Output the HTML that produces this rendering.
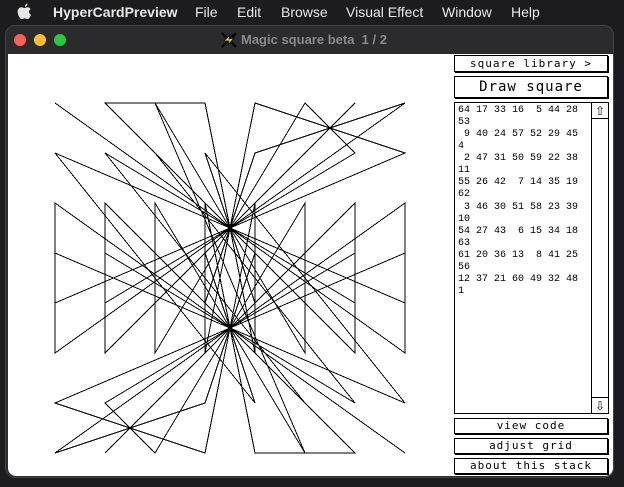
<!DOCTYPE html>
<html><head><meta charset="utf-8"><style>
*{margin:0;padding:0;box-sizing:border-box}
body{width:624px;height:487px;background:#1c1c1e;position:relative;overflow:hidden;font-family:"Liberation Sans",sans-serif}
.menu{position:absolute;left:0;top:0;width:624px;height:24px;background:#1c1c1e;color:#e8e8e8;font-size:14px;line-height:24px}
.menu span{position:absolute;top:0}
.win{position:absolute;left:5px;top:25px;width:609px;height:453px;background:#2b2b2d;border-radius:10px;border:1px solid #444}
.title{position:absolute;left:0;top:0;width:100%;height:28px;color:#8a8a8a;font-weight:bold;font-size:13px;line-height:28px}
.dot{position:absolute;top:8px;width:12px;height:12px;border-radius:6px}
.content{position:absolute;left:2px;top:28px;width:605px;height:422px;background:#fff;border-radius:0 0 8px 8px}
.btn{position:absolute;border:1px solid #000;box-shadow:1px 1px 0 #000;background:#fff;text-align:center;color:#000;font-family:"DejaVu Sans Mono","Liberation Mono",monospace;font-size:11px;letter-spacing:1px}
.fld{position:absolute;left:454px;top:102px;width:155px;height:312px;border:1px solid #000;background:#fff;font-family:"Liberation Mono",monospace;font-size:10px;line-height:12.07px;padding:2px 0 0 3px;white-space:pre;color:#000}
.sb{position:absolute;left:591px;top:102px;width:18px;height:312px;border:1px solid #000;background:#fff}
</style></head><body>
<div class="menu">
<svg style="position:absolute;left:17px;top:3px" width="15" height="17" viewBox="0 0 15 17"><path d="M10.5 0.5 C10.6 2 9.6 3.6 8 3.8 C7.8 2.3 8.9 0.8 10.5 0.5 Z M7.5 5 C8.5 5 9.5 4.2 10.8 4.3 C12 4.4 13 5 13.6 6 C11.3 7.4 11.7 10.7 14 11.7 C13.4 13.4 12.3 15.6 10.9 16 C9.8 16.2 9.2 15.4 7.7 15.4 C6.2 15.4 5.6 16.2 4.5 16 C2.8 15.5 0.5 11.8 0.6 8.6 C0.7 5.6 2.8 4.3 4.4 4.3 C5.7 4.3 6.6 5 7.5 5 Z" fill="#e8e8e8"/></svg>
<span style="left:53px;font-weight:bold">HyperCardPreview</span>
<span style="left:195px">File</span>
<span style="left:237px">Edit</span>
<span style="left:281px">Browse</span>
<span style="left:346px">Visual Effect</span>
<span style="left:442px">Window</span>
<span style="left:511px">Help</span>
</div>
<div class="win">
<div class="title">
<div class="dot" style="left:8px;background:#fe5f57"></div>
<div class="dot" style="left:28px;background:#febc2e"></div>
<div class="dot" style="left:48px;background:#28c840"></div>
<svg style="position:absolute;left:215px;top:6px" width="16" height="16" viewBox="0 0 16 16"><path d="M1 1 L15 15 M15 1 L1 15" stroke="#000" stroke-width="2"/><path d="M3 9 L9 3 L8 7 L13 6 L7 13 L8 9 Z" fill="#f5e400" stroke="#000" stroke-width=".7"/></svg>
<span style="position:absolute;left:235px">Magic square beta &nbsp;1 / 2</span>
</div>
<div class="content"></div>
</div>
<svg style="position:absolute;left:0;top:0" width="624" height="487">
<polyline fill="none" stroke="#000" stroke-width="1" shape-rendering="crispEdges" points="405,453 55,203 55,303 405,153 255,103 205,353 205,253 255,403 55,153 405,303 405,203 55,453 205,403 255,253 255,353 205,103 105,103 355,353 355,253 105,403 155,453 305,203 305,303 155,153 355,403 105,253 105,353 355,103 305,153 155,303 155,203 305,453 155,103 305,353 305,253 155,403 105,453 355,203 355,303 105,153 305,403 155,253 155,353 305,103 355,153 105,303 105,203 355,453 255,453 205,203 205,303 255,153 405,103 55,353 55,253 405,403 205,153 255,303 255,203 205,453 55,403 405,253 405,353 55,103"/>
</svg>
<div class="btn" style="left:454px;top:55px;width:154px;height:17px;line-height:15px">square library &gt;</div>
<div class="btn" style="left:454px;top:76px;width:154px;height:22px;line-height:20px;font-size:14px">Draw square</div>
<div class="fld">64 17 33 16  5 44 28
53
 9 40 24 57 52 29 45
4
 2 47 31 50 59 22 38
11
55 26 42  7 14 35 19
62
 3 46 30 51 58 23 39
10
54 27 43  6 15 34 18
63
61 20 36 13  8 41 25
56
12 37 21 60 49 32 48
1</div>
<div class="sb">
<div style="position:absolute;left:0;top:0;width:16px;height:16px;border-bottom:1px solid #000;text-align:center;font-size:12px;line-height:16px">&#8679;</div>
<div style="position:absolute;left:0;bottom:0;width:16px;height:16px;border-top:1px solid #000;text-align:center;font-size:12px;line-height:16px">&#8681;</div>
</div>
<div class="btn" style="left:454px;top:418px;width:154px;height:16px;line-height:14px">view code</div>
<div class="btn" style="left:454px;top:438px;width:154px;height:16px;line-height:14px">adjust grid</div>
<div class="btn" style="left:454px;top:458px;width:154px;height:16px;line-height:14px">about this stack</div>
</body></html>
